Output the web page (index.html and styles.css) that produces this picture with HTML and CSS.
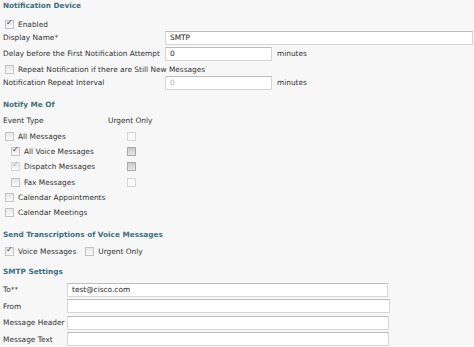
FILE: index.html
```html
<!DOCTYPE html>
<html lang="en">
<head>
  <meta charset="UTF-8">
  <title>Notification Device</title>
  <link rel="stylesheet" href="styles.css">
</head>
<body>
  <div class="section first">
    <h2 class="title">Notification Device</h2>
    <div class="row check-row"><span class="cb checked"></span>Enabled</div>
    <div class="row field-row r-name">
      <label class="lbl">Display Name*</label>
      <span class="input wide">SMTP</span>
    </div>
    <div class="row field-row r-delay">
      <label class="lbl">Delay before the First Notification Attempt</label>
      <span class="input short">0</span>
      <span class="unit">minutes</span>
    </div>
    <div class="row check-row r-repeat"><span class="cb"></span>Repeat Notification if there are Still New Messages</div>
    <div class="row field-row r-interval">
      <label class="lbl">Notification Repeat Interval</label>
      <span class="input short disabled">0</span>
      <span class="unit">minutes</span>
    </div>
  </div>

  <div class="section notify">
    <h2 class="title">Notify Me Of</h2>
    <div class="row head-row">
      <span class="col-event">Event Type</span>
      <span class="col-urgent">Urgent Only</span>
    </div>
    <div class="row ev-row">
      <span class="col-event"><span class="cb"></span>All Messages</span>
      <span class="col-box"><span class="cb light"></span></span>
    </div>
    <div class="row ev-row sub">
      <span class="col-event"><span class="cb checked"></span>All Voice Messages</span>
      <span class="col-box"><span class="cb dark"></span></span>
    </div>
    <div class="row ev-row sub">
      <span class="col-event"><span class="cb checked dim"></span>Dispatch Messages</span>
      <span class="col-box"><span class="cb dark"></span></span>
    </div>
    <div class="row ev-row sub">
      <span class="col-event"><span class="cb"></span>Fax Messages</span>
      <span class="col-box"><span class="cb light"></span></span>
    </div>
    <div class="row ev-row"><span class="cb"></span>Calendar Appointments</div>
    <div class="row ev-row"><span class="cb"></span>Calendar Meetings</div>
  </div>

  <div class="section transcribe">
    <h2 class="title">Send Transcriptions of Voice Messages</h2>
    <div class="row check-row">
      <span class="cb checked"></span>Voice Messages
      <span class="cb gap"></span>Urgent Only
    </div>
  </div>

  <div class="section smtp">
    <h2 class="title">SMTP Settings</h2>
    <div class="row smtp-row">
      <label class="lbl">To**</label>
      <span class="input s1">test@cisco.com</span>
    </div>
    <div class="row smtp-row">
      <label class="lbl">From</label>
      <span class="input s2"></span>
    </div>
    <div class="row smtp-row">
      <label class="lbl">Message Header</label>
      <span class="input s3"></span>
    </div>
    <div class="row smtp-row">
      <label class="lbl">Message Text</label>
      <span class="input s3"></span>
    </div>
  </div>
</body>
</html>
```

FILE: styles.css
```css
html, body {
  margin: 0;
  padding: 0;
  background: #f7f7f7;
  color: #333;
  font-family: 'DejaVu Sans', Verdana, sans-serif;
  font-size: 7.4px;
  overflow: hidden;
}
.section {
  padding-left: 3px;
}
.title {
  margin: 0;
  height: 12px;
  line-height: 12px;
  font-size: 7.3px;
  font-weight: bold;
  color: #3c6f7d;
}
.row {
  display: flex;
  align-items: center;
  white-space: nowrap;
}
.check-row {
  height: 14px;
  padding-left: 2px;
}
.first .check-row {
  margin-top: 5px;
}
.field-row {
  height: 15px;
}
.first .r-name {
  margin-top: -1px;
}
.first .r-repeat {
  margin-top: 1px;
}
.first .r-delay {
  margin-top: 1px;
}
.first .r-interval {
  margin-top: -1px;
}
.lbl {
  width: 162px;
  flex: none;
}
.input {
  box-sizing: border-box;
  height: 14px;
  line-height: 12px;
  padding-left: 4px;
  background: #fff;
  border: 1px solid #d6d6d6;
  border-top-color: #bdbdbd;
  color: #222;
}
.input.wide {
  width: 308px;
}
.input.short {
  width: 107px;
}
.input.disabled {
  color: #aaa;
}
.unit {
  margin-left: 5px;
}

/* checkboxes */
.cb {
  box-sizing: border-box;
  display: inline-block;
  position: relative;
  width: 9px;
  height: 9px;
  margin-right: 4px;
  flex: none;
  border: 1px solid #c4c4c4;
  background: linear-gradient(#e6e6e6, #fafafa);
}
.cb.checked::after {
  content: "\2713";
  position: absolute;
  left: 0;
  top: -3px;
  font-size: 8px;
  color: #2e3566;
}
.cb.dim {
  border-color: #d8d8d8;
}
.cb.dim::after {
  color: #a8a8a8;
}
.cb.light {
  border-color: #d6d6d6;
  background: #f9f9f9;
}
.cb.dark {
  border-color: #a9a9a9;
  background: linear-gradient(#c8c8c8, #e8e8e8);
}
.cb.gap {
  margin-left: 9px;
}

.notify {
  margin-top: 9px;
}
.head-row {
  height: 12px;
  margin-top: 3px;
  margin-bottom: 2.5px;
}
.col-event {
  display: flex;
  align-items: center;
  width: 105px;
}
.ev-row {
  height: 15.3px;
  padding-left: 2px;
}
.ev-row.sub .col-event {
  padding-left: 6px;
  width: 116px;
}
.ev-row:nth-child(3) .col-event {
  width: 122px;
}
.col-box {
  display: flex;
}

.transcribe {
  margin-top: 8.5px;
}
.transcribe .check-row {
  margin-top: 3.5px;
}
.smtp {
  margin-top: 8px;
}
.smtp-row {
  height: 16.5px;
}
.smtp .smtp-row:nth-of-type(1) {
  margin-top: 3px;
}
.smtp-row .lbl {
  width: 64px;
}
.input.s1 {
  width: 321px;
}
.input.s2 {
  width: 323px;
}
.input.s3 {
  width: 322px;
}
```
